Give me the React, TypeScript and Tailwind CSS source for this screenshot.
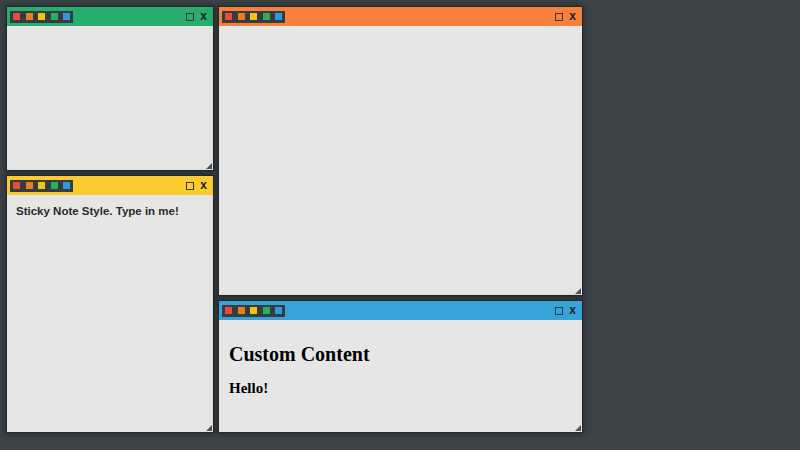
import React from 'react'

const dots = ['bg-[#e74c3c]', 'bg-[#e67e22]', 'bg-[#f1c40f]', 'bg-[#27ae60]', 'bg-[#3498db]']

function Win({
  bar,
  className,
  children,
}: {
  bar: string
  className: string
  children?: React.ReactNode
}) {
  return (
    <div
      className={`absolute flex flex-col bg-[#e6e6e6] shadow-[0_0_0_1px_rgba(30,34,37,0.6),0_0_6px_2px_rgba(20,24,27,0.55)] ${className}`}
    >
      <div className={`flex h-[19px] shrink-0 items-center justify-between pl-[3px] pr-[6px] ${bar}`}>
        <div className="flex h-[12px] items-center gap-[5.5px] bg-[#363b3f] px-[3px]">
          {dots.map((d) => (
            <span key={d} className={`block h-[7px] w-[7px] ${d}`} />
          ))}
        </div>
        <div className="flex items-center gap-[6px]">
          <span className="block h-[8px] w-[8px] border border-[#3a3a3a]" />
          <span className="pb-[1px] text-[12px] font-bold leading-none text-[#222] font-['Liberation_Sans',Arial,sans-serif]">
            x
          </span>
        </div>
      </div>
      <div className="relative flex-1">
        {children}
        <svg className="absolute bottom-[1px] right-[1px]" width="6" height="6" viewBox="0 0 6 6">
          <path d="M6 0 L6 6 L0 6 Z" fill="#555" />
        </svg>
      </div>
    </div>
  )
}

export default function App() {
  return (
    <div className="relative h-[450px] w-[800px] overflow-hidden bg-[#3d4448]">
      <Win bar="bg-[#27ae6e]" className="left-[7px] top-[7px] h-[163px] w-[206px]" />
      <Win bar="bg-[#fbcb2f]" className="left-[7px] top-[176px] h-[256px] w-[206px]">
        <p className="px-[9px] pt-[8px] text-[11.5px] font-bold text-[#2a2a2a] font-['Liberation_Sans',Arial,sans-serif]">
          Sticky Note Style. Type in me!
        </p>
      </Win>
      <Win bar="bg-[#f7803a]" className="left-[219px] top-[7px] h-[288px] w-[363px]" />
      <Win bar="bg-[#38a3d9]" className="left-[219px] top-[301px] h-[131px] w-[363px]">
        <div className="px-[10px] pt-[22px] font-['Liberation_Serif','Times_New_Roman',serif] text-black">
          <h2 className="text-[20px] font-bold leading-[24px]">Custom Content</h2>
          <h3 className="mt-[13px] text-[15px] font-bold leading-[18px]">Hello!</h3>
        </div>
      </Win>
    </div>
  )
}
